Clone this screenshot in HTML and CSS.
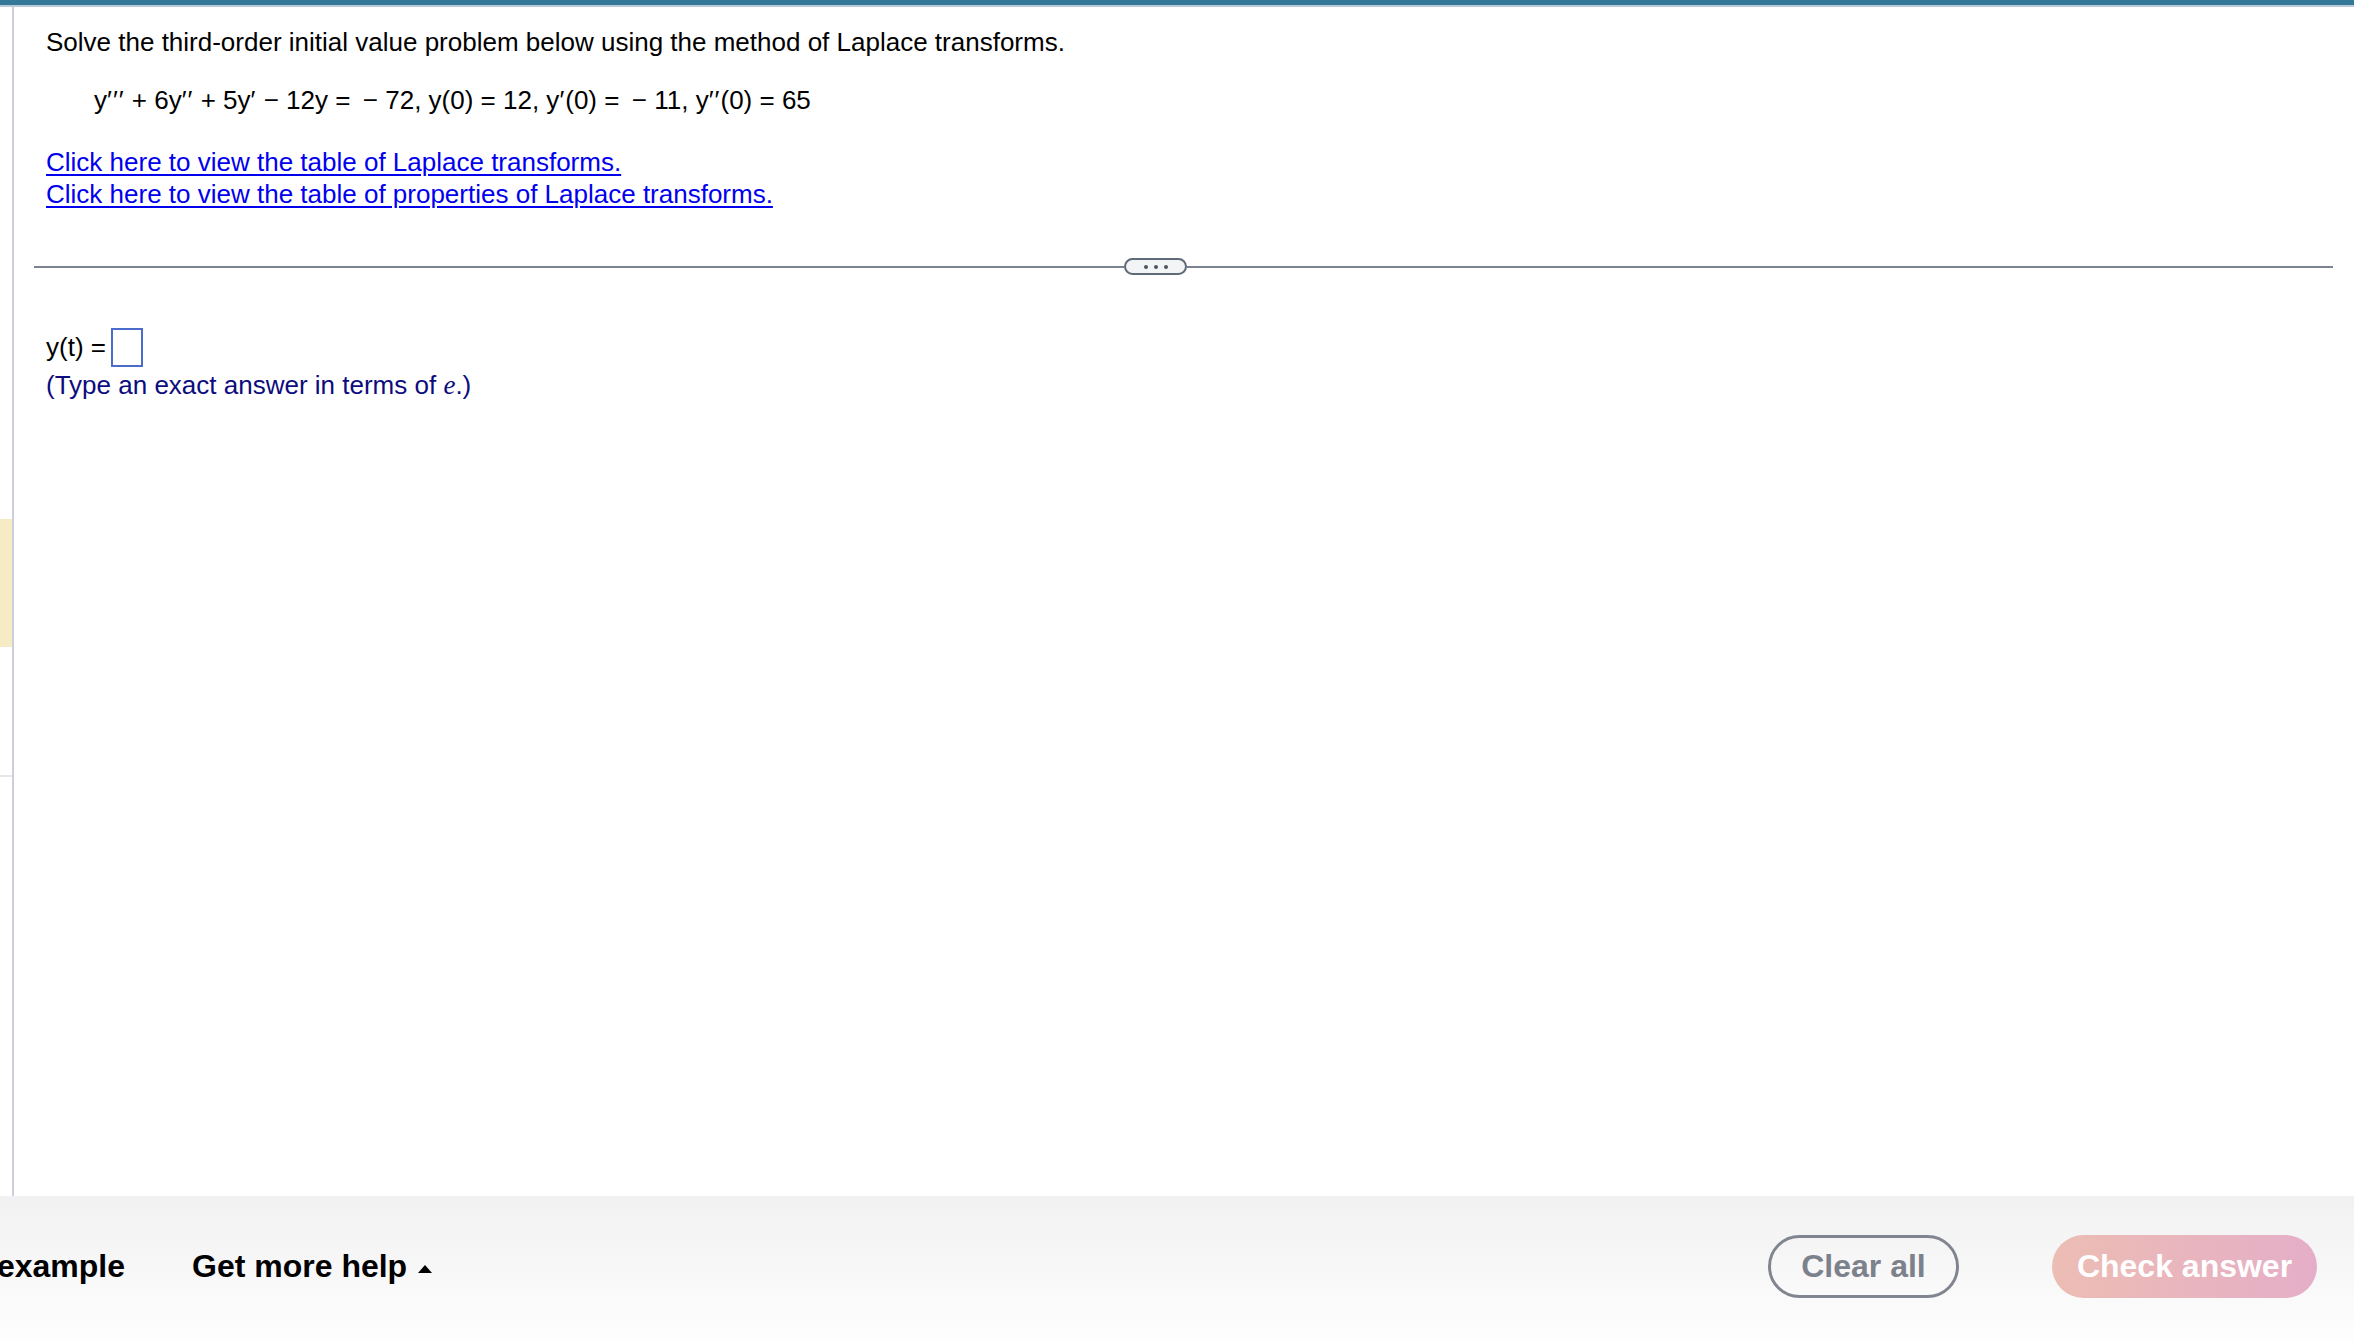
FILE: index.html
```html
<!DOCTYPE html>
<html lang="en">
<head>
    <meta charset="UTF-8">
    <title>Laplace transforms</title>
    <link rel="stylesheet" href="styles.css">
</head>
<body>
    <div class="top-bar"></div>

    <div class="page">
        <div class="side">
            <div class="side-mark"></div>
            <div class="side-tick"></div>
        </div>

        <div class="content">
            <div class="question">
                <p class="prompt">Solve the third-order initial value problem below using the method of Laplace transforms.</p>
                <p class="equation">y<span class="pr">&#8242;&#8242;&#8242;</span> + 6y<span class="pr">&#8242;&#8242;</span> + 5y<span class="pr">&#8242;</span> &#8722; 12y = &#8201;&#8722; 72, y(0) = 12, y<span class="pr">&#8242;</span>(0) = &#8201;&#8722; 11, y<span class="pr">&#8242;&#8242;</span>(0) = 65</p>
                <div class="links">
                    <a href="#">Click here to view the table of Laplace transforms.</a>
                    <a href="#">Click here to view the table of properties of Laplace transforms.</a>
                </div>
            </div>

            <div class="divider">
                <div class="divider-line divider-left"></div>
                <div class="divider-pill">
                    <span class="dot"></span><span class="dot"></span><span class="dot"></span>
                </div>
                <div class="divider-line divider-right"></div>
            </div>

            <div class="answer">
                <div class="answer-row">
                    <span>y(t) =</span>
                    <span class="answer-box"></span>
                </div>
                <p class="hint">(Type an exact answer in terms of <i class="math-e">e</i>.)</p>
            </div>
        </div>
    </div>

    <div class="footer">
        <div class="footer-example"><span>example</span></div>
        <div class="footer-help">
            <span>Get more help</span>
            <svg class="caret" width="14" height="8" viewBox="0 0 14 8"><path d="M7 0 L14 8 L0 8 Z" fill="#000"/></svg>
        </div>
        <div class="footer-spacer"></div>
        <div class="btn btn-clear">Clear all</div>
        <div class="btn btn-check">Check answer</div>
    </div>
</body>
</html>
```

FILE: styles.css
```css
/* Base */
body {
    margin: 0;
    padding: 0;
    background-color: #ffffff;
    font-family: "Liberation Sans", Arial, Helvetica, sans-serif;
    color: #000000;
    width: 2354px;
    height: 1343px;
    overflow: hidden;
}

p {
    margin: 0;
}

.top-bar {
    height: 5px;
    background-color: #337799;
    border-bottom: 2px solid #b9c9d9;
}

/* Page */
.page {
    display: flex;
    flex-direction: row;
    height: 1189px;
}

.side {
    width: 12px;
    display: flex;
    flex-direction: column;
    padding-top: 512px;
    box-sizing: border-box;
}

.side-mark {
    height: 128px;
    background-color: #f7ebc6;
}

.side-tick {
    margin-top: 128px;
    height: 2px;
    background-color: #e6e6e6;
}

.content {
    flex: 1;
    border-left: 2px solid #cdd0dc;
    padding: 21px 21px 0 20px;
}

/* Question */
.question {
    padding-left: 12px;
    font-size: 26px;
}

.prompt {
    line-height: 28px;
}

.equation {
    line-height: 28px;
    margin-top: 30px;
    padding-left: 48px;
}

.pr {
    letter-spacing: 1px;
}

.links {
    display: flex;
    flex-direction: column;
    align-items: flex-start;
    margin-top: 32px;
}

.links a {
    color: #0000ee;
    line-height: 32px;
    text-decoration: underline;
    text-underline-offset: 3px;
}

/* Divider */
.divider {
    display: flex;
    flex-direction: row;
    align-items: center;
    margin-top: 48px;
    height: 17px;
}

.divider-line {
    height: 2px;
    background-color: #7b8391;
}

.divider-left {
    flex: 0 0 1090px;
}

.divider-right {
    flex: 1;
}

.divider-pill {
    width: 63px;
    height: 17px;
    box-sizing: border-box;
    border: 2px solid #5e6a78;
    border-radius: 9px;
    background-color: #f3f4f6;
    display: flex;
    justify-content: center;
    align-items: center;
    gap: 6px;
}

.dot {
    width: 4px;
    height: 4px;
    border-radius: 50%;
    background-color: #4d5560;
}

/* Answer */
.answer {
    padding-left: 12px;
    margin-top: 52px;
    font-size: 26px;
}

.answer-row {
    display: flex;
    align-items: center;
    height: 40px;
}

.answer-box {
    width: 32px;
    height: 39px;
    box-sizing: border-box;
    border: 2px solid #4a6ccc;
    margin-left: 5px;
}

.hint {
    color: #0c0c7e;
    line-height: 28px;
    margin-top: 4px;
}

.math-e {
    font-family: "Liberation Serif", "Times New Roman", serif;
    font-size: 27px;
}

/* Footer */
.footer {
    height: 147px;
    background: linear-gradient(#f1f1f1, #fefefe);
    display: flex;
    flex-direction: row;
    align-items: center;
    padding-bottom: 7px;
    padding-right: 37px;
    box-sizing: border-box;
    font-size: 32px;
    font-weight: bold;
}

.footer-example {
    width: 125px;
    overflow: hidden;
    display: flex;
    justify-content: flex-end;
    white-space: nowrap;
}

.footer-help {
    margin-left: 67px;
    display: flex;
    align-items: center;
    gap: 11px;
}

.caret {
    margin-top: 6px;
}

.footer-spacer {
    flex: 1;
}

.btn {
    height: 63px;
    box-sizing: border-box;
    border-radius: 32px;
    display: flex;
    align-items: center;
    justify-content: center;
}

.btn-clear {
    width: 191px;
    border: 3px solid #80858f;
    color: #7c818c;
}

.btn-check {
    width: 265px;
    margin-left: 93px;
    background: linear-gradient(90deg, #ecbdb3, #e5aec8);
    color: #ffffff;
}
```
